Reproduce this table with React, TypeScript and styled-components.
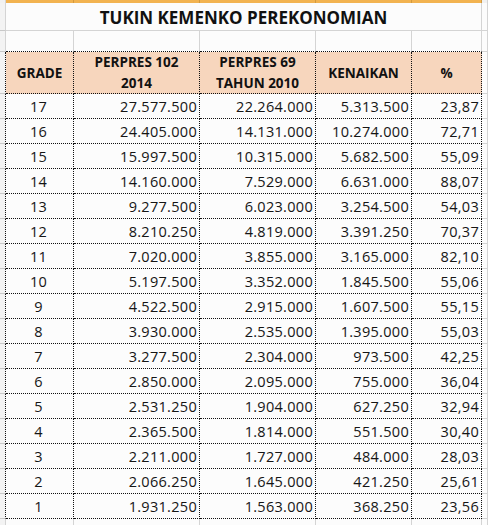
import { Fragment, ReactElement } from "react"
import styled, { createGlobalStyle } from "styled-components"

interface Row {
  grade: string
  perpres102: string
  perpres69: string
  kenaikan: string
  percent: string
}

const rows: Row[] = [
  { grade: "17", perpres102: "27.577.500", perpres69: "22.264.000", kenaikan: "5.313.500", percent: "23,87" },
  { grade: "16", perpres102: "24.405.000", perpres69: "14.131.000", kenaikan: "10.274.000", percent: "72,71" },
  { grade: "15", perpres102: "15.997.500", perpres69: "10.315.000", kenaikan: "5.682.500", percent: "55,09" },
  { grade: "14", perpres102: "14.160.000", perpres69: "7.529.000", kenaikan: "6.631.000", percent: "88,07" },
  { grade: "13", perpres102: "9.277.500", perpres69: "6.023.000", kenaikan: "3.254.500", percent: "54,03" },
  { grade: "12", perpres102: "8.210.250", perpres69: "4.819.000", kenaikan: "3.391.250", percent: "70,37" },
  { grade: "11", perpres102: "7.020.000", perpres69: "3.855.000", kenaikan: "3.165.000", percent: "82,10" },
  { grade: "10", perpres102: "5.197.500", perpres69: "3.352.000", kenaikan: "1.845.500", percent: "55,06" },
  { grade: "9", perpres102: "4.522.500", perpres69: "2.915.000", kenaikan: "1.607.500", percent: "55,15" },
  { grade: "8", perpres102: "3.930.000", perpres69: "2.535.000", kenaikan: "1.395.000", percent: "55,03" },
  { grade: "7", perpres102: "3.277.500", perpres69: "2.304.000", kenaikan: "973.500", percent: "42,25" },
  { grade: "6", perpres102: "2.850.000", perpres69: "2.095.000", kenaikan: "755.000", percent: "36,04" },
  { grade: "5", perpres102: "2.531.250", perpres69: "1.904.000", kenaikan: "627.250", percent: "32,94" },
  { grade: "4", perpres102: "2.365.500", perpres69: "1.814.000", kenaikan: "551.500", percent: "30,40" },
  { grade: "3", perpres102: "2.211.000", perpres69: "1.727.000", kenaikan: "484.000", percent: "28,03" },
  { grade: "2", perpres102: "2.066.250", perpres69: "1.645.000", kenaikan: "421.250", percent: "25,61" },
  { grade: "1", perpres102: "1.931.250", perpres69: "1.563.000", kenaikan: "368.250", percent: "23,56" },
]

const GRID = "#d4d4d4"
const DOTS = "1px dotted #111"

const GlobalStyle = createGlobalStyle`
  * {
    box-sizing: border-box;
  }

  body {
    margin: 0;
    background: #fcfcfc;
    font-family: "Open Sans", "Noto Sans", sans-serif;
    color: #151515;
  }
`

const Sheet = styled.div`
  display: grid;
  grid-template-columns: 6px 68px 126px 116px 96px 70px 1fr;
  grid-template-rows: 3px 28px 21px 42px repeat(17, 25px) 25px;
  width: 488px;
  height: 525px;
  overflow: hidden;
  background: #fcfcfc;
`

const ColumnHeader = styled.div<{ $selected?: boolean }>`
  background: ${({ $selected }) => ($selected ? "#f2b350" : "#f1f1f1")};
  border-right: 1px solid ${({ $selected }) => ($selected ? "#d39a3e" : GRID)};
`

const RowHeader = styled.div<{ $dotted?: boolean }>`
  background: #f3f3f3;
  border-right: ${({ $dotted }) => ($dotted ? DOTS : `1px solid ${GRID}`)};
  border-bottom: 1px solid #c8c8c8;
`

const EmptyCell = styled.div<{ $dottedBottom?: boolean }>`
  border-right: 1px solid ${GRID};
  border-bottom: ${({ $dottedBottom }) => ($dottedBottom ? DOTS : `1px solid ${GRID}`)};
`

const TitleCell = styled.div`
  grid-column: span 5;
  display: flex;
  align-items: flex-end;
  justify-content: center;
  padding-bottom: 1px;
  border-right: 1px solid ${GRID};
  border-bottom: 1px solid ${GRID};
  font-size: 17px;
  font-weight: 700;
  line-height: 23px;
  color: #111;
`

const HeadCell = styled.div`
  display: flex;
  align-items: center;
  justify-content: center;
  padding-top: 1px;
  background: #f7d6bd;
  border-right: ${DOTS};
  border-bottom: ${DOTS};
  font-size: 13.5px;
  font-weight: 700;
  line-height: 21px;
  text-align: center;
  color: #111;
`

const DataCell = styled.div<{ $align?: "center" | "right" }>`
  display: flex;
  align-items: flex-end;
  justify-content: ${({ $align }) => ($align === "center" ? "center" : "flex-end")};
  padding: 0 2px 0 0;
  border-right: ${DOTS};
  border-bottom: ${DOTS};
  font-size: 14.5px;
  letter-spacing: 0.3px;
  line-height: 22px;
`

function TukinSheet(): ReactElement {
  return (
    <Sheet>
      <ColumnHeader />
      <ColumnHeader $selected />
      <ColumnHeader $selected />
      <ColumnHeader $selected />
      <ColumnHeader $selected />
      <ColumnHeader $selected />
      <ColumnHeader />

      <RowHeader />
      <TitleCell>TUKIN KEMENKO PEREKONOMIAN</TitleCell>
      <EmptyCell />

      <RowHeader />
      <EmptyCell $dottedBottom />
      <EmptyCell $dottedBottom />
      <EmptyCell $dottedBottom />
      <EmptyCell $dottedBottom />
      <EmptyCell $dottedBottom />
      <EmptyCell />

      <RowHeader $dotted />
      <HeadCell>GRADE</HeadCell>
      <HeadCell>
        PERPRES 102
        <br />
        2014
      </HeadCell>
      <HeadCell>
        PERPRES 69
        <br />
        TAHUN 2010
      </HeadCell>
      <HeadCell>KENAIKAN</HeadCell>
      <HeadCell>%</HeadCell>
      <EmptyCell />

      {rows.map((row) => (
        <Fragment key={row.grade}>
          <RowHeader $dotted />
          <DataCell $align="center">{row.grade}</DataCell>
          <DataCell>{row.perpres102}</DataCell>
          <DataCell>{row.perpres69}</DataCell>
          <DataCell>{row.kenaikan}</DataCell>
          <DataCell>{row.percent}</DataCell>
          <EmptyCell />
        </Fragment>
      ))}

      <RowHeader />
      <EmptyCell />
      <EmptyCell />
      <EmptyCell />
      <EmptyCell />
      <EmptyCell />
      <EmptyCell />
    </Sheet>
  )
}

export default function App(): ReactElement {
  return (
    <>
      <GlobalStyle />
      <TukinSheet />
    </>
  )
}
